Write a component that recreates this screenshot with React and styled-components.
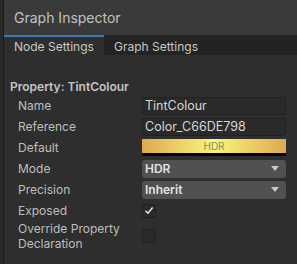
import React from 'react'
import styled, { createGlobalStyle } from 'styled-components'

const GlobalStyle = createGlobalStyle`
  html, body {
    margin: 0;
    padding: 0;
    background: #282828;
  }
  body {
    font-family: Inter, "Noto Sans", sans-serif;
  }
`

const Window = styled.div`
  display: flex;
  width: 297px;
  height: 264px;
  overflow: hidden;
  background: #282828;
`

const Panel = styled.div`
  flex: 1;
  display: flex;
  flex-direction: column;
  margin-left: 3px;
  border-left: 1px solid #1c1c1c;
  background: #2e2e2e;
`

const Header = styled.div`
  height: 35px;
  display: flex;
  align-items: center;
  padding-left: 10px;
  background: #3a3a3a;
  color: #c2c2c2;
  font-size: 14px;
`

const Tabs = styled.div`
  display: flex;
  height: 20px;
  background: #232323;
`

const Tab = styled.div`
  width: 100px;
  box-sizing: border-box;
  padding-left: 10px;
  display: flex;
  align-items: center;
  font-size: 12px;
  color: #c8c8c8;
  background: ${({ active }) => active ? '#2e2e2e' : 'transparent'};
  border-top: 2px solid ${({ active }) => active ? '#3a79bb' : 'transparent'};
`

const Body = styled.div`
  display: flex;
  flex-direction: column;
  padding: 25px 11px 0 6px;
`

const Heading = styled.div`
  height: 15px;
  line-height: 14px;
  font-size: 12px;
  font-weight: 600;
  color: #c4c4c4;
`

const Row = styled.div`
  display: grid;
  grid-template-columns: 132px 1fr;
  align-items: center;
  height: ${({ tall }) => tall ? 30 : 21}px;
`

const Label = styled.div`
  padding-left: 8px;
  font-size: 12px;
  line-height: 15px;
  color: #bebebe;
`

const TextField = styled.div`
  height: 18px;
  box-sizing: border-box;
  display: flex;
  align-items: center;
  padding-left: 2px;
  background: #2a2a2a;
  border: 1px solid #212121;
  border-radius: 3px;
  font-size: 12.5px;
  color: #d6d6d6;
`

const Swatch = styled.div`
  height: 17px;
  box-sizing: border-box;
  display: flex;
  align-items: center;
  justify-content: center;
  background: linear-gradient(90deg, #dfa852 0%, #fbf67a 50%, #dfa852 100%);
  border-bottom: 3px solid #050505;
  font-size: 10px;
  color: #8a8566;
`

const Dropdown = styled.div`
  height: 18px;
  box-sizing: border-box;
  display: flex;
  align-items: center;
  justify-content: space-between;
  padding: 0 7px 0 3px;
  background: #515151;
  border-radius: 3px;
  font-size: 12px;
  font-weight: 600;
  color: #e2e2e2;
`

const Arrow = styled.span`
  width: 0;
  height: 0;
  border-left: 4px solid transparent;
  border-right: 4px solid transparent;
  border-top: 5px solid #c8c8c8;
`

const Checkbox = styled.div`
  width: 14px;
  height: 14px;
  box-sizing: border-box;
  display: flex;
  align-items: center;
  justify-content: center;
  background: #2a2a2a;
  border: 1px solid #202020;
  border-radius: 2px;
`

const Check = () => (
  <svg width='10' height='9' viewBox='0 0 10 9'>
    <path d='M1.5 4.8 L4 7.2 L8.6 1.6' fill='none' stroke='#e8e8e8' strokeWidth='1.5' />
  </svg>
)

export default function App () {
  return (
    <Window>
      <GlobalStyle />
      <Panel>
        <Header>Graph Inspector</Header>
        <Tabs>
          <Tab active>Node Settings</Tab>
          <Tab>Graph Settings</Tab>
        </Tabs>
        <Body>
          <Heading>Property: TintColour</Heading>
          <Row>
            <Label>Name</Label>
            <TextField>TintColour</TextField>
          </Row>
          <Row>
            <Label>Reference</Label>
            <TextField>Color_C66DE798</TextField>
          </Row>
          <Row>
            <Label>Default</Label>
            <Swatch>HDR</Swatch>
          </Row>
          <Row>
            <Label>Mode</Label>
            <Dropdown>HDR<Arrow /></Dropdown>
          </Row>
          <Row>
            <Label>Precision</Label>
            <Dropdown>Inherit<Arrow /></Dropdown>
          </Row>
          <Row>
            <Label>Exposed</Label>
            <Checkbox><Check /></Checkbox>
          </Row>
          <Row tall>
            <Label>Override Property Declaration</Label>
            <Checkbox />
          </Row>
        </Body>
      </Panel>
    </Window>
  )
}
